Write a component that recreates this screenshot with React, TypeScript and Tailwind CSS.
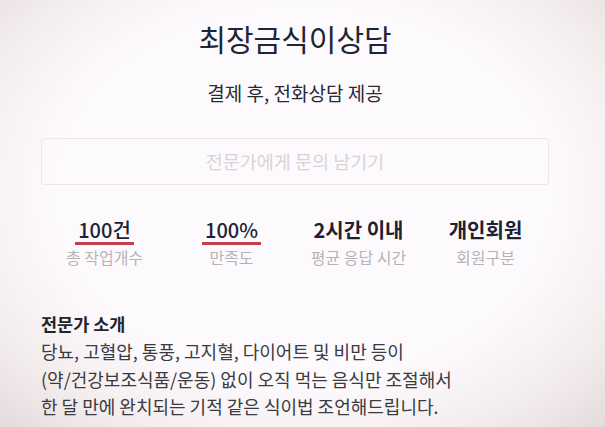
import React from "react";

const font = { fontFamily: '"Noto Sans CJK KR", "Noto Sans", sans-serif' };

function Stat({ value, label, underline, bold }: { value: string; label: string; underline?: boolean; bold?: boolean }) {
  return (
    <div className="flex flex-col items-center">
      <div
        className={`text-[20px] leading-[24px] text-[#1c2230] px-[3px] ${bold ? "font-semibold" : "font-medium"} ${underline ? "border-b-[3px] border-[#c2404f]" : "border-b-[3px] border-transparent"}`}
      >
        {value}
      </div>
      <div className="text-[16px] leading-[22px] text-[#b8b2b6] mt-[1px]">{label}</div>
    </div>
  );
}

export default function App() {
  return (
    <div
      style={font}
      className="w-[605px] h-[427px] overflow-hidden bg-[radial-gradient(ellipse_75%_80%_at_50%_45%,#fdfafd_55%,#f3eced_78%,#cfc3c3_120%)]"
    >
      <div className="pl-[41px] pt-[18px] flex flex-col">
        <h1 className="text-center w-[508px] text-[30px] leading-[40px] text-[#1f2533] font-normal">최장금식이상담</h1>
        <p className="text-center w-[508px] text-[19px] leading-[26px] text-[#262a33] mt-[22px]">결제 후, 전화상담 제공</p>
        <div className="mt-[32px] h-[47px] w-[508px] rounded-[3px] border border-[#ece6ea] flex items-center justify-center text-[18.5px] text-[#d9d3d7]">
          전문가에게 문의 남기기
        </div>
        <div className="grid grid-cols-4 w-[508px] mt-[33px]">
          <Stat value="100건" label="총 작업개수" underline />
          <Stat value="100%" label="만족도" underline />
          <Stat value="2시간 이내" label="평균 응답 시간" bold />
          <Stat value="개인회원" label="회원구분" bold />
        </div>
        <div className="mt-[44px] text-[17.5px] leading-[24px] font-semibold text-[#22252c]">전문가 소개</div>
        <div className="mt-[2px] text-[18px] leading-[27.5px] text-[#3a3a40]">
          <p>당뇨, 고혈압, 통풍, 고지혈, 다이어트 및 비만 등이</p>
          <p>(약/건강보조식품/운동) 없이 오직 먹는 음식만 조절해서</p>
          <p>한 달 만에 완치되는 기적 같은 식이법 조언해드립니다.</p>
        </div>
      </div>
    </div>
  );
}
